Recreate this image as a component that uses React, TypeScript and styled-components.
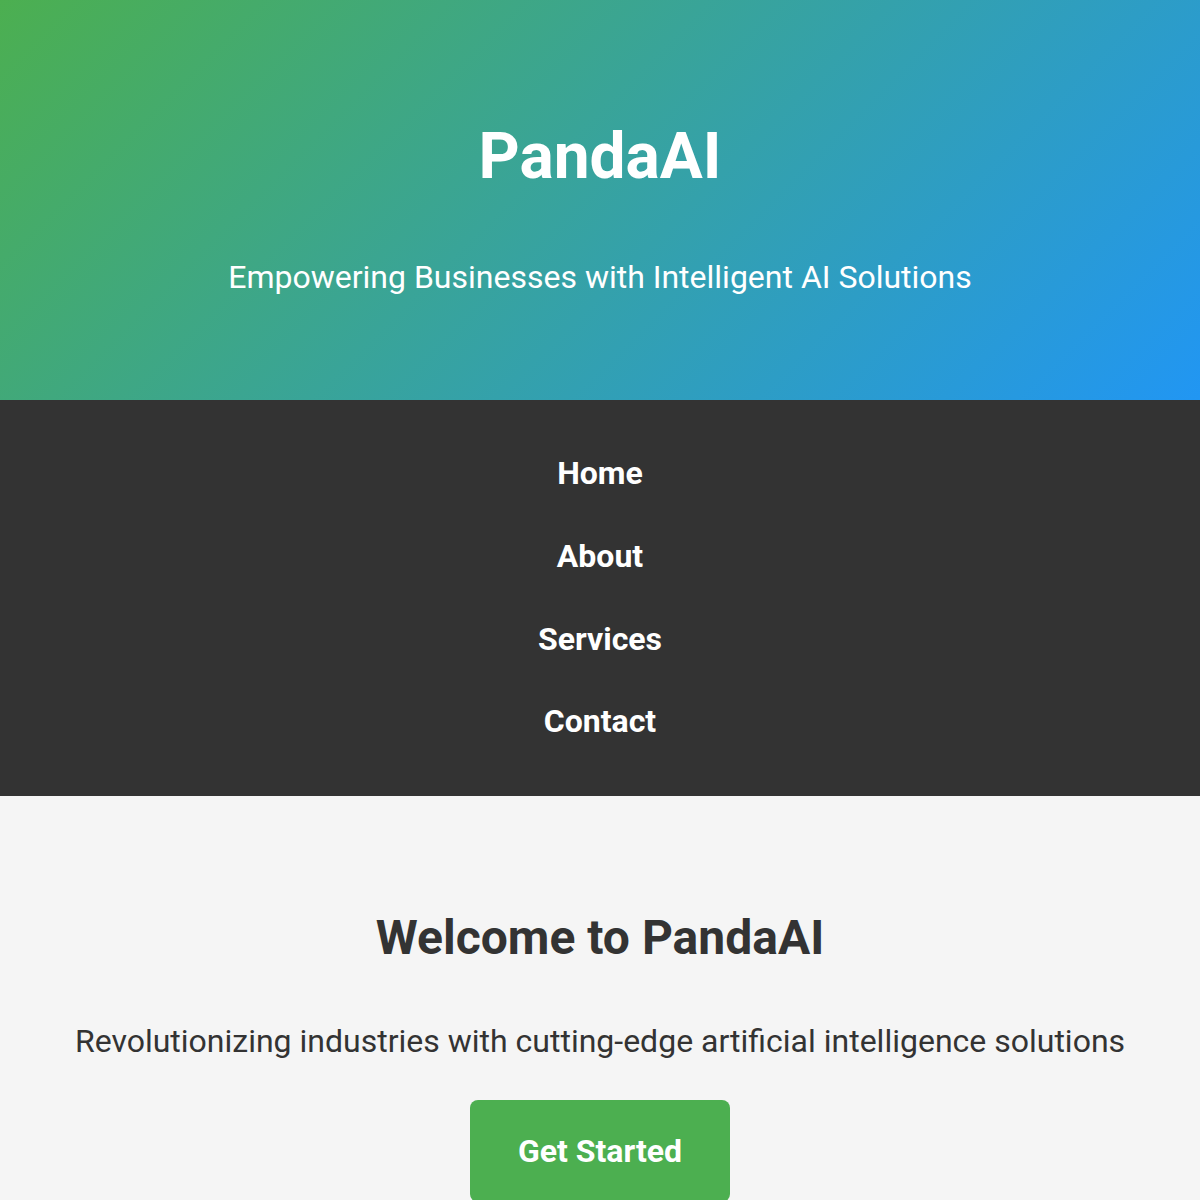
import React from "react";
import styled, { createGlobalStyle } from "styled-components";

const GlobalStyle = createGlobalStyle`
    body {
        margin: 0;
        font-family: Roboto, "Liberation Sans", Arial, sans-serif;
        font-size: 32px;
        color: #333333;
        background: #f5f5f5;
    }
`

const Header = styled.header`
    box-sizing: border-box;
    height: 400px;
    padding: 119px 20px 0;
    text-align: center;
    color: #ffffff;
    background: linear-gradient(135deg, #4caf50 0%, #2196f3 100%);

    h1 {
        margin: 0;
        font-size: 64px;
        font-weight: 700;
    }
    p {
        margin: 64px 0 0;
        font-size: 32px;
        font-weight: 400;
    }
`

const Nav = styled.nav`
    box-sizing: border-box;
    height: 396px;
    background: #333333;
    padding: 32px 0 0;

    ul {
        list-style: none;
        margin: 0;
        padding: 0;
    }
`

const NavItem = styled.li`
    height: 82.67px;
    display: flex;
    align-items: center;
    justify-content: center;

    a {
        color: #ffffff;
        text-decoration: none;
        font-size: 32px;
        font-weight: 700;
    }
`

const Hero = styled.section`
    padding: 113px 20px 40px;
    text-align: center;

    h2 {
        margin: 0;
        font-size: 48px;
        font-weight: 700;
        color: #333333;
    }
    p {
        margin: 56px 0 0;
        font-size: 32px;
        color: #333333;
    }
`

const Button = styled.a`
    display: inline-block;
    margin-top: 40px;
    padding: 32px 48px;
    border-radius: 8px;
    background: #4caf50;
    color: #ffffff;
    font-size: 32px;
    font-weight: 700;
    text-decoration: none;
`

const links = ["Home", "About", "Services", "Contact"];

export default function App() {
    return (
        <>
            <GlobalStyle />
            <Header>
                <h1>PandaAI</h1>
                <p>Empowering Businesses with Intelligent AI Solutions</p>
            </Header>
            <Nav>
                <ul>
                    {links.map((l) => (
                        <NavItem key={l}><a href="#">{l}</a></NavItem>
                    ))}
                </ul>
            </Nav>
            <Hero>
                <h2>Welcome to PandaAI</h2>
                <p>Revolutionizing industries with cutting-edge artificial intelligence solutions</p>
                <Button href="#">Get Started</Button>
            </Hero>
        </>
    )
}
